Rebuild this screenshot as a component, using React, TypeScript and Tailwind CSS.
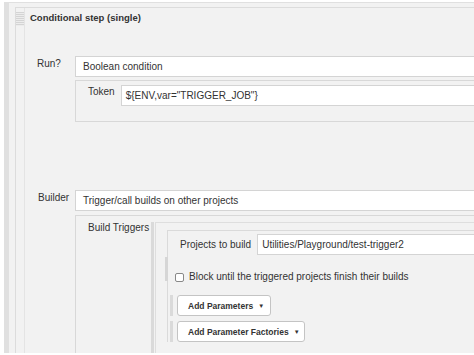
import React from 'react';

const font = { fontFamily: '"Liberation Sans", Arial, sans-serif' };

function Field({ value, className = '' }: { value: string; className?: string }) {
  return (
    <div
      className={`-mr-[20px] flex h-[21px] flex-1 items-center border border-[#d4d4d4] bg-white text-[10px] leading-[12px] text-[#333] ${className}`}
    >
      {value}
    </div>
  );
}

function DropButton({ label, width }: { label: string; width: string }) {
  return (
    <div className="flex items-stretch gap-[4px] pl-[2px]">
      <div className="w-[3px] bg-[#dadada]" />
      <button
        className={`flex h-[21px] ${width} items-center gap-[5px] rounded-[3px] border border-[#c4c4c4] bg-white pl-[10px] text-[8.5px] font-bold leading-[10px] text-[#333]`}
      >
        {label}
        <span className="text-[6px]">▼</span>
      </button>
    </div>
  );
}

export default function App() {
  return (
    <div className="h-[355px] w-[474px] overflow-hidden bg-white pl-[4px] pt-[2px] text-[#333]" style={font}>
      <div className="h-[351px] overflow-hidden border-l-[5px] border-t border-[#e0e0e0] bg-[#f2f2f2] pl-[6px] pt-[4px]">
        <div className="flex h-[346px] border-l border-t border-[#dcdcdc]">
          <div className="mt-[4px] h-[14px] w-[8px] shrink-0 bg-[repeating-linear-gradient(to_bottom,#d4d4d4_0px,#d4d4d4_1px,#ececec_1px,#ececec_2px)]" />
          <div className="flex-1 border-l border-[#e4e4e4] pl-[5px]">
            <div className="pt-[4px] text-[9.5px] font-bold leading-[12px]">Conditional step (single)</div>

            <div className="mt-[32px] flex">
              <div className="w-[45px] shrink-0 pl-[7px] pt-[2px] text-[10px] leading-[12px]">Run?</div>
              <div className="flex-1">
                <Field value="Boolean condition" className="pl-[7px]" />
                <div className="-mr-[20px] mt-[3px] flex h-[42px] gap-[6px] border border-[#d8d8d8] pl-[12px] pt-[4px]">
                  <div className="pt-[1px] text-[10px] leading-[12px]">Token</div>
                  <Field value={'${ENV,var="TRIGGER_JOB"}'} className="h-[20px] pl-[4px]" />
                </div>
              </div>
            </div>

            <div className="mt-[68px] flex">
              <div className="w-[45px] shrink-0 pl-[8px] pt-[2px] text-[10px] leading-[12px]">Builder</div>
              <div className="flex-1">
                <Field value="Trigger/call builds on other projects" className="pl-[7px]" />
                <div className="-mr-[20px] mt-[4px] flex h-[200px] border border-[#d8d8d8]">
                  <div className="w-[75px] shrink-0 pl-[12px] pt-[6px] text-[10px] leading-[12px]">Build Triggers</div>
                  <div className="mt-[6px] flex flex-1 border-l-[3px] border-[#dadada]">
                    <div className="ml-[1px] flex-1 border-l border-t border-[#dedede] pl-[11px] pt-[7px]">
                      <div className="flex flex-col border-l border-t border-[#dadada] pt-[3px]">
                        <div className="flex items-center gap-[6px] pl-[12px]">
                          <div className="text-[10px] leading-[12px]">Projects to build</div>
                          <Field value="Utilities/Playground/test-trigger2" className="pl-[4px]" />
                        </div>
                        <div className="mt-[2px] flex items-stretch">
                          <div className="-ml-[3px] h-[24px] w-[3px] bg-[#d6d6d6]" />
                          <div className="flex items-center gap-[5px] pl-[7px] pt-[14px] text-[10px] leading-[12px]">
                            <span className="h-[9px] w-[9px] rounded-[2px] border border-[#888] bg-white" />
                            Block until the triggered projects finish their builds
                          </div>
                        </div>
                        <div className="mt-[12px] flex flex-col gap-[5px]">
                          <DropButton label="Add Parameters" width="w-[94px]" />
                          <DropButton label="Add Parameter Factories" width="w-[128px]" />
                        </div>
                      </div>
                    </div>
                  </div>
                </div>
              </div>
            </div>
          </div>
        </div>
      </div>
    </div>
  );
}
